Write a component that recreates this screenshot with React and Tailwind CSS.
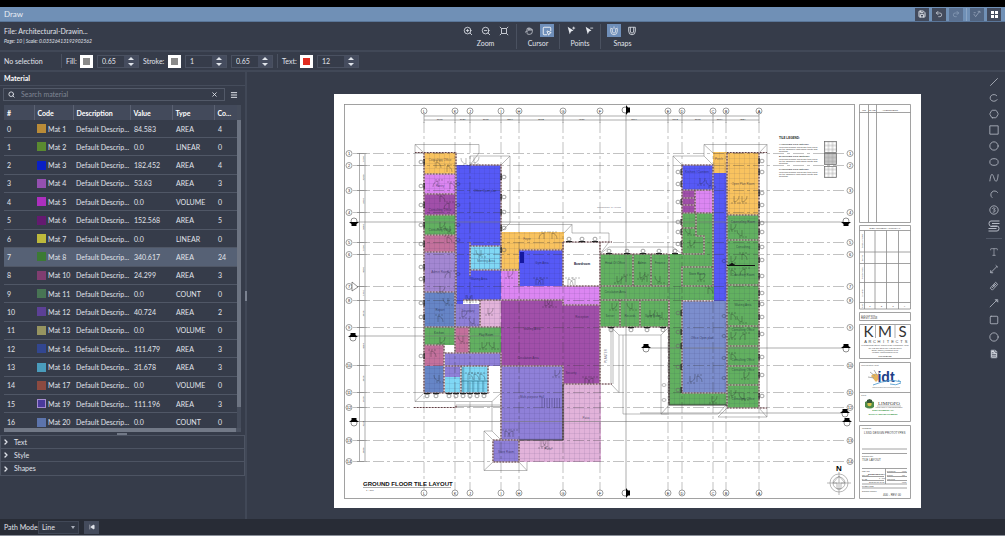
import React, { useState } from 'react'
import {
  ZoomIn, ZoomOut, Hand, SquareMousePointer, Search, X, Menu, Save, Undo2, Redo2,
  ChevronRight, Hexagon, Square, Circle, Type, SkipBack, FileText,
} from 'lucide-react'

const materials = [
  [0, '#b98b38', 'Mat 1', '84.583', 'AREA', 4],
  [1, '#5a8a30', 'Mat 2', '0.0', 'LINEAR', 0],
  [2, '#0a20c4', 'Mat 3', '182.452', 'AREA', 4],
  [3, '#9450b0', 'Mat 4', '53.63', 'AREA', 3],
  [4, '#ac2fbe', 'Mat 5', '0.0', 'VOLUME', 0],
  [5, '#641a70', 'Mat 6', '152.568', 'AREA', 5],
  [6, '#bdb93c', 'Mat 7', '0.0', 'LINEAR', 0],
  [7, '#3c7a34', 'Mat 8', '340.617', 'AREA', 24],
  [8, '#803d70', 'Mat 10', '24.299', 'AREA', 3],
  [9, '#487454', 'Mat 11', '0.0', 'COUNT', 0],
  [10, '#5c4096', 'Mat 12', '40.724', 'AREA', 2],
  [11, '#969460', 'Mat 13', '0.0', 'VOLUME', 0],
  [12, '#324690', 'Mat 14', '111.479', 'AREA', 3],
  [13, '#4a9cbc', 'Mat 16', '31.678', 'AREA', 3],
  [14, '#8c4a40', 'Mat 17', '0.0', 'VOLUME', 0],
  [15, '#4a3a9c', 'Mat 19', '111.196', 'AREA', 3],
  [16, '#5c74ac', 'Mat 20', '0.0', 'COUNT', 0],
]

const orange = '#f9c35f'
const pink = '#dc86f2'
const purple = '#a14fa9'
const green = '#62b060'
const rose = '#c4719c'
const violet = '#a387d2'
const steel = '#6685c6'
const blue = '#5659f6'
const cyan = '#80d8f5'
const peri = '#8f80d8'
const pale = '#e2b3da'

// x1, y1, x2, y2, fill
const rooms = [
  [424, 153, 456, 174, orange],
  [424, 174, 456, 194, pink],
  [424, 194, 456, 215, purple],
  [424, 215, 456, 235, green],
  [424, 235, 456, 252, rose],
  [424, 252, 456, 292, violet],
  [424, 292, 456, 327, steel],
  [456, 165, 501, 300, blue],
  [456, 300, 463, 304, blue],
  [470, 246, 501, 270, cyan],
  [456, 304, 480, 327, peri],
  [480, 300, 501, 327, pale],
  [424, 327, 455, 345, green],
  [455, 327, 469, 353, rose],
  [469, 327, 501, 353, green],
  [424, 345, 444, 366, rose],
  [445, 353, 501, 366, peri],
  [445, 366, 460, 377, peri],
  [424, 366, 444, 393, steel],
  [445, 377, 460, 393, cyan],
  [461, 366, 488, 393, cyan],
  [501, 232, 564, 250, orange],
  [501, 250, 519, 271, orange],
  [519, 250, 563, 286, blue],
  [501, 271, 519, 300, pink],
  [519, 286, 563, 300, pink],
  [563, 286, 600, 305, pink],
  [501, 300, 563, 366, purple],
  [563, 305, 600, 384, purple],
  [501, 366, 563, 440, peri],
  [563, 384, 601, 462, pale],
  [519, 440, 563, 462, pale],
  [493, 440, 519, 462, peri],
  [600, 254, 669, 286, green],
  [600, 286, 714, 300, green],
  [600, 300, 669, 327, green],
  [669, 254, 682, 405, green],
  [682, 213, 714, 286, green],
  [682, 165, 714, 190, blue],
  [682, 190, 695, 213, purple],
  [695, 190, 714, 213, pink],
  [682, 393, 727, 405, green],
  [682, 301, 727, 393, '#7c8ecd'],
  [713, 152, 727, 173, orange],
  [714, 173, 727, 301, blue],
  [727, 153, 759, 215, orange],
  [727, 215, 759, 408, green],
]

const columns = [
  ['L', 424], ['K', 455], ['J', 470], ['I', 501], ['H', 519], ['G', 563],
  ['F', 600], ['E', 668], ['D', 682], ['C', 713], ['B', 726], ['A', 759],
]

const rows = [153, 165, 190, 212, 242, 254, 286, 300, 327, 365, 392, 407, 440, 461]

const walls = [
  'M415 152.5H456V165', 'M424 153V393H444', 'M456 165V304M470 165H501V270', 'M424 174H456M424 194H456M424 215H456M424 235H456M424 252H456M424 292H456',
  'M470 242V276M470 246H501M470 270H519V286', 'M424 327H501M455 293V353M480 300V327M463 300H563V305H600', 'M469 327V353M445 353H501V440',
  'M424 345H444V393H488V366H445M461 366V393', 'M501 366H563V440', 'M519 250H563V286H600M563 242V286M563 242H612', 'M600 242V384M563 384H612',
  'M493 440H519V462H493Z', 'M600 254H669V286H600M633 254V286M651 254V286', 'M600 300H669V327H600M620 300V327M640 300V327',
  'M682 165V254M682 165H713V286H682V267H713M682 190H713M695 190V213M682 213H713M682 198H695M682 205H695M682 228H696V213M696 228V236H704V254H682',
  'M669 300V405M682 300V393H727M713 301H682', 'M727 153V408M759 153V408M727 152.5H767M727 408H767', 'M727 215H759M727 240H759M727 285H759M727 326H759M727 346H759M727 366H759M727 385H759',
  'M414 407.5H456V405',
]

const roofs = [
  'M415 144.500H479V153L470 165M415 144.500L424 153M415 144.500V401.500H492L501 393M415 401.500L424 393',
  'M470 165V156H510V223L501 232M510 156L501 165',
  'M501 232V224.500H572L564 233M572 224.500V233H609V242L600 254M600 254L609 247H673L682 254',
  'M673 254V156H704V144.500H767V417H718L727 408M673 156L682 165M704 156L713 165M704 144.500L713 153M767 144.500L759 153M767 417L759 408',
  'M492 401.500V431M484 431H492L501 440M484 431V470.500H527V462M484 470.500L493 462M527 470.500L519 462M484 431L493 440',
  'M456 405H501M456 406.500H501',
  'M611 327V384M613 327V384M611 327L619 335V392.500L611 384M619 335H661V414L669 405M661 335L669 327M623 335V414H718L726 405M661 414H669',
]

// hinge x, y and the direction the leaf opens to
const doors = [
  [436, 168, 1, -1], [447, 172, 1, -1], [438, 187, -1, -1], [450, 189, 1, -1], [440, 202, 1, -1], [449, 209, -1, -1],
  [440, 222, 1, 1], [450, 226, -1, 1], [447, 243, 1, -1], [450, 278, -1, -1], [440, 286, 1, 1], [448, 298, -1, 1],
  [438, 322, 1, -1], [466, 158, -1, 1], [474, 157, 1, 1], [481, 250, -1, 1], [466, 295, 1, 1], [472, 295, -1, 1],
  [462, 311, 1, 1], [474, 318, -1, 1], [488, 308, 1, 1], [440, 337, 1, 1], [482, 342, 1, 1], [494, 342, -1, 1],
  [463, 336, -1, 1], [431, 357, 1, -1], [439, 375, -1, 1], [468, 380, 1, -1], [474, 380, 1, -1], [480, 380, 1, -1],
  [508, 271, 1, 1], [544, 239, -1, -1], [552, 239, 1, -1], [536, 285, 1, -1], [543, 285, -1, -1], [568, 285, 1, -1], [575, 285, -1, -1],
  [545, 300, 1, 1], [552, 300, -1, 1], [555, 370, 1, 1], [505, 437, 1, -1], [513, 437, -1, -1], [541, 441, 1, 1], [548, 441, -1, 1],
  [585, 384, 1, -1], [593, 384, -1, -1], [617, 276, 1, 1], [626, 282, -1, -1], [640, 272, 1, 1], [647, 282, -1, -1], [660, 276, -1, 1],
  [612, 303, 1, 1], [632, 303, -1, 1], [650, 310, 1, 1], [662, 312, -1, 1], [700, 178, 1, 1], [711, 180, -1, 1], [700, 274, 1, 1],
  [708, 294, 1, -1], [690, 240, 1, 1], [690, 228, -1, 1], [731, 224, 1, 1], [742, 230, -1, 1], [731, 256, 1, 1], [742, 260, 1, -1],
  [731, 276, 1, -1], [745, 275, -1, -1], [731, 320, 1, -1], [742, 316, -1, 1], [731, 332, 1, 1], [745, 340, -1, -1], [731, 360, 1, -1],
  [744, 372, 1, 1], [731, 390, 1, 1], [744, 393, -1, 1], [697, 382, 1, -1], [690, 376, 1, 1], [712, 396, 1, 1], [742, 196, 1, 1], [734, 196, 1, 1],
]

const windows = [
  [421, 162], [421, 186], [421, 205], [421, 225], [421, 244], [421, 267], [421, 279], [421, 303], [421, 317], [421, 356],
  [504, 177], [504, 197], [504, 212], [504, 228], [504, 250], [427, 396], [436, 396], [449, 396], [456, 396], [463, 396], [470, 396], [477, 396], [484, 396],
  [569, 239], [582, 239], [595, 239], [609, 251], [627, 251], [643, 251], [659, 251], [675, 251],
  [611, 330], [631, 330], [647, 330], [663, 330], [678, 172], [678, 184], [678, 202], [678, 222], [678, 232], [678, 244],
  [762, 161], [762, 172], [762, 193], [762, 205], [762, 223], [762, 232], [762, 247], [762, 260], [762, 276], [762, 293], [762, 304],
  [762, 317], [762, 334], [762, 357], [762, 375], [762, 396], [678, 313], [678, 332], [678, 346], [678, 367], [678, 390],
]

// switches drawn inside the rooms
const sockets = [[724, 261], [724, 316], [724, 336], [724, 358], [724, 378], [664, 385], [664, 400], [458, 184], [458, 205], [458, 225], [458, 240], [458, 274]]

const roomNames = [
  [440, 161, 'Consulting Office'], [440, 187, 'Pantry'], [440, 211, 'Consulting Office'], [440, 231, 'Consulting Office'],
  [440, 273, 'Admin Room'], [440, 311, 'Report'], [485, 192, 'Office Open plan'], [486, 262, 'Meeting Area'], [479, 280, 'Waiting Area'],
  [468, 312, 'Secretary'], [486, 336, 'Play Room'], [439, 334, 'Kitchen'], [527, 240, 'Foyer'], [542, 264, 'Gym Area'],
  [532, 330, 'Waiting Area'], [582, 318, 'Reception'], [528, 359, 'Circulation Area'], [532, 398, 'Multi-purpose Hall'], [506, 453, 'Store Room'],
  [586, 419, 'Patio'], [548, 450, 'Patio'], [571, 374, 'Security'], [615, 264, 'Head Of Office'], [642, 264, 'Admin'],
  [660, 264, 'Finance'], [615, 293, 'Circulation Area'], [610, 317, 'Server'], [630, 317, 'Records'], [653, 317, 'Store Room'],
  [702, 339, 'Office Open plan'], [697, 173, 'Kitchen / Canteen'], [697, 275, 'Store Room'], [719, 160, 'Porch'],
  [743, 185, 'Open Plan Room'], [743, 223, 'Counselling Room'], [743, 248, 'Consulting'], [743, 276, 'Consulting Room'],
  [743, 306, 'Waiting Area'], [743, 331, 'Consulting Office'], [743, 361, 'Consulting Office'], [743, 371, 'Consulting Office'], [743, 400, 'Consulting Office'],
]

function SectionMark({ x, y, flip }) {
  return (
    <g transform={`translate(${x} ${y})${flip ? ' rotate(180)' : ''}`}>
      <circle r="3" cy="-1" fill="#fff" stroke="#444" strokeWidth=".6" />
      <path d="M-5 0H5L2.500 2V4H-2.500V2Z" fill="#000" />
    </g>
  )
}

function GridBubble({ x, y, label }) {
  return (
    <g>
      <circle cx={x} cy={y} r="3" fill="#fff" stroke="#777" strokeWidth=".7" />
      <text x={x} y={y + 1.500} fontSize="4" textAnchor="middle" fill="#222">{label}</text>
    </g>
  )
}

function TitleBlock() {
  return (
    <g>
      <g fill="none" stroke="#8a8a8a" strokeWidth=".8">
        <path d="M859.500 104.500H910.500V222.500H859.500ZM859.500 112.500H910.500M868.500 104.500V222.500M876.500 104.500V222.500" />
        <path d="M859.500 225.500H910.500V309H859.500ZM859.500 230.500H910.500M859.500 252H910.500M859.500 263.500H910.500M859.500 282.500H910.500M859.500 302.500H910.500M864.500 230.500V309M875 230.500V309M886.500 230.500V309M898.500 230.500V309" />
        <path d="M859.500 312.500H910.500V320.500H859.500ZM859.500 324.500H910.500V358.500H859.500ZM859.500 362.500H910.500V421.500H859.500ZM859.500 392.500H910.500" />
        <path d="M859.500 425.500H910.500V498.500H859.500ZM862 449H907M862 453.500H907M862 468.500H907M862 484H907M862 488H907M885.500 468.500V484M862 476.500H884M862 480.500H884M887 472.500H907M887 476.500H907M887 480.500H907" />
      </g>
      <g fontSize="2.500" fill="#444" textAnchor="middle">
        <text x="864" y="110.500">NO</text>
        <text x="872.500" y="110.500">DATE</text>
        <text x="890" y="110.500">AMENDMENT</text>
        <text x="885" y="228.800">DEPARTMENT APPROVAL</text>
        {['1', '2', '3', '4'].map((n, i) => <text key={n} x={870 + i * 11.500} y="307">{n}</text>)}
        {[['SIGNATURE', 241], ['DATE', 258], ['POSITION', 273], ['NAME', 293], ['NO', 306]].map(([t, y]) => (
          <text key={t} transform={`translate(863 ${y}) rotate(-90)`}>{t}</text>
        ))}
      </g>
      <text x="861" y="315.500" fontSize="2" fill="#555">CAD FILE 2018</text>
      <text x="861" y="319" fontSize="3" fill="#333">REVIT 2018</text>
      <g fill="#333" fontFamily="'Lato','Open Sans',sans-serif" fontSize="15" textAnchor="middle">
        <text x="868.500" y="337">K</text>
        <text x="885" y="337">M</text>
        <text x="902.500" y="337">S</text>
      </g>
      <path d="M875.500 325V338M895 325V338" stroke="#777" strokeWidth=".6" />
      <g fill="#444" fontSize="4" textAnchor="middle">
        {'ARCHITECTS'.split('').map((c, i) => <text key={i} x={865.500 + i * 4.500} y="343">{c}</text>)}
      </g>
      <g fill="#444" fontSize="2" textAnchor="middle">
        <text x="885" y="346.300">97 Schoeman Street, Pioneer Park, Polokwane, 0699</text>
        <text x="885" y="348.800">Tel: 015 291 2345 Fax: 015 291 2346</text>
        <text x="885" y="351">Email: admin@kmsarch.co.za</text>
        <text x="885" y="353.200">Website: www.kmsarch.co.za</text>
        <text x="885" y="357" fontWeight="700">POLOKWANE</text>
      </g>
      <text x="861" y="366" fontSize="2" fill="#555">Implementing Agent</text>
      <g>
        <path d="M871 376a5 5 0 0 1 9 2l-4 4z" fill="#e6b45a" />
        <path d="M870 372l5 4M874 370l3 5M880 371l-2 4M868 377l6 1" stroke="#999" strokeWidth=".8" />
        <text x="886" y="382" textAnchor="middle" fontSize="14" fontWeight="700" fill="#203f88">idt</text>
        <path d="M873 385q17-7 28-3l-3-2M890 384q6 2 11-1" fill="none" stroke="#5aa0d0" strokeWidth=".9" />
        <text x="886" y="387.500" textAnchor="middle" fontSize="2" fill="#666">independent development trust</text>
      </g>
      <text x="861" y="395.500" fontSize="2" fill="#555">Client</text>
      <g>
        <path d="M865 402q4-3 9 0v5q-4 3-9 0z" fill="#4f8a4a" />
        <circle cx="869.500" cy="404" r="2.200" fill="#d9c24a" />
        <path d="M867 400l2.500-1 2.500 1v3h-5z" fill="#36553a" />
        <text x="889" y="405" textAnchor="middle" fontSize="5" fontFamily="'Liberation Serif',serif" fill="#444">LIMPOPO</text>
        <path d="M877 406H901" stroke="#888" strokeWidth=".5" />
        <text x="889" y="408" textAnchor="middle" fontSize="2" fill="#555">PROVINCIAL GOVERNMENT</text>
        <text x="883" y="411" textAnchor="middle" fontSize="2.500" fontWeight="700" fill="#2c8f3a">DEPARTMENT OF</text>
        <text x="883" y="414.500" textAnchor="middle" fontSize="2.500" fontWeight="700" fill="#2c8f3a">SOCIAL DEVELOPMENT</text>
      </g>
      <g fill="#444" fontSize="2">
        <text x="862" y="429">PROJECT</text>
        <text x="864" y="433.500" fontSize="3">LSSD DESIGN PROTOTYPES</text>
        <text x="862" y="456.500">Drawing title</text>
        <text x="862" y="461" fontSize="3">TILE LAYOUT</text>
        <text x="862" y="471.500">REF NO</text>
        <text x="868" y="474.500" fontSize="2.500" fontWeight="700">2018/KMS/104</text>
        <text x="862" y="476">SCALE</text>
        <text x="879" y="479">1 : 100</text>
        <text x="862" y="479.800">DATE</text>
        <text x="869" y="483">2018/10/11 09:30</text>
        <text x="862" y="486.500">SHEET SIZE</text>
        <text x="887" y="471.500">Designed</text>
        <text x="902" y="472">KMS</text>
        <text x="887" y="476">Drawn</text>
        <text x="902" y="476">PM</text>
        <text x="887" y="480">Checked</text>
        <text x="902" y="483">KMS</text>
        <text x="862" y="492">Drawing number</text>
        <text x="883" y="496" fontSize="3">400 - REV 00</text>
      </g>
    </g>
  )
}

function FloorPlan() {
  return (
    <svg viewBox="334 94 587 414" className="block w-full bg-white" fontFamily="'Liberation Sans',Arial,sans-serif" role="img" aria-label="Ground floor tile layout">
      <defs>
        <pattern id="tiles" width="5" height="5" patternUnits="userSpaceOnUse" x="424" y="153">
          <path d="M0 0H5M0 0V5" stroke="#1c1c50" strokeOpacity=".28" strokeWidth=".6" />
        </pattern>
        <pattern id="legendTile" width="4" height="4" patternUnits="userSpaceOnUse" x="824.500" y="141.500">
          <path d="M0 0H4V4H0Z" fill="none" stroke="#999" strokeWidth=".6" />
        </pattern>
      </defs>
      <rect x="344.500" y="104.500" width="510" height="394" fill="none" stroke="#8a8a8a" strokeWidth=".8" />

      <g fill="none" stroke="#777" strokeWidth=".5">
        {roofs.map((d) => <path key={d} d={d} />)}
      </g>

      {rooms.map(([x1, y1, x2, y2, fill]) => (
        <rect key={`${x1}-${y1}`} x={x1} y={y1} width={x2 - x1} height={y2 - y1} fill={fill} />
      ))}
      {rooms.map(([x1, y1, x2, y2]) => (
        <rect key={`${x1}-${y1}`} x={x1} y={y1} width={x2 - x1} height={y2 - y1} fill="url(#tiles)" />
      ))}

      {/* Grid lines */}
      <g stroke="#333" strokeOpacity=".5" strokeWidth=".6" strokeDasharray="11 3 3 3">
        {columns.map(([l, x]) => <path key={l} d={`M${x} 122V490`} />)}
        {rows.map((y) => <path key={y} d={`M353 ${y}.500H847`} />)}
      </g>
      <g stroke="#777" strokeWidth=".6">
        <path d="M424 116H759M424 120H759M359.500 153V461M365 153V461" />
        {columns.map(([l, x]) => <path key={l} d={`M${x} 114V123`} />)}
        {rows.map((y) => <path key={y} d={`M357 ${y}.500H367`} />)}
        <path d="M354 222H846M352 336H500M646 348H846M354 421.500H846M640 413H846M626 112V490" />
      </g>
      <g fontSize="2.500" fill="#222" textAnchor="middle">
        {columns.slice(1).map(([l, x], i) => <text key={l} x={(x + columns[i][1]) / 2} y="119.500">{(x - columns[i][1]) * 128}</text>)}
        {rows.slice(1).map((y, i) => (
          <text key={y} transform={`translate(364 ${(y + rows[i]) / 2}) rotate(-90)`}>{(y - rows[i]) * 128}</text>
        ))}
      </g>
      {columns.map(([l, x]) => (
        <g key={l}>
          <GridBubble x={x} y={111} label={l} />
          <GridBubble x={x} y={493} label={l} />
        </g>
      ))}
      {rows.map((y, i) => (
        <g key={y}>
          <GridBubble x={349} y={y + 0.500} label={i + 1} />
          <GridBubble x={850} y={y + 0.500} label={i + 1} />
        </g>
      ))}

      {/* Walls */}
      <g fill="none">
        {walls.map((d) => (
          <g key={d}>
            <path d={d} stroke="#c9b3b5" strokeWidth="1.200" />
            <path d={d} stroke="#5e4348" strokeWidth="1.200" strokeDasharray="1.500 1.500" />
          </g>
        ))}
        <path d="M563 384V440H519M669 327V405H727" stroke="#333" strokeWidth="1" />
        <path d="M727 265.500H755M729 265.500q3-4 6 0" stroke="#111" strokeWidth="1" fill="#111" />
        <path d="M542 398V408M544.500 398V408M547 398V408M549.500 398V408M552 398V408M554.500 398V408M557 398V408M559.500 398V408" stroke="#3b3568" strokeWidth=".4" />
        <path d="M463 367V392M468 381V392M473 381V392M478 381V392M483 381V392M461 381H488" stroke="#2b6d86" strokeWidth=".7" />
      </g>
      <rect x="520" y="252" width="4" height="11" fill="#1518a0" />

      <g fill="none" stroke="#222" strokeOpacity=".5" strokeWidth=".6">
        {doors.map(([x, y, sx, sy]) => (
          <path key={`${x}-${y}`} d={`M${x} ${y}v${sy * 6}q${sx * 5} ${-sy} ${sx * 5} ${-sy * 6}M${x - 3} ${y + sy * 7}h2m1 0h2m1 0h2`} />
        ))}
        {sockets.map(([x, y]) => <ellipse key={`${x}-${y}`} cx={x} cy={y} rx="2" ry="1.500" />)}
      </g>
      {windows.map(([x, y]) => {
        const horizontal = [239, 251, 330, 396].includes(y) && x < 676
        return (
          <g key={`${x}-${y}`}>
            <ellipse cx={x} cy={y} rx="2" ry="1.800" fill="none" stroke="#666" strokeWidth=".6" />
            {horizontal
              ? <rect x={x - 3} y={y < 300 ? y + 2 : y - 3} width="6" height="1.200" fill="#222" />
              : <rect x={x < 422 || (x > 670 && x < 680) ? x + 2.500 : x - 3.500} y={y - 3} width="1.200" height="6" fill="#222" />}
          </g>
        )
      })}

      <g fontSize="3" fill="#151535" textAnchor="middle">
        <g fillOpacity=".65">
          {roomNames.map(([x, y, name]) => <text key={`${x}-${y}`} x={x} y={y}>{name}</text>)}
          <text x="609" y="208" fontSize="2.500">OUTDOOR WAITING</text>
          <text transform="translate(607 356) rotate(-90)">PLANTER</text>
        </g>
        <text x="582" y="265" fontWeight="700">Boardroom</text>
      </g>

      <SectionMark x={354} y={222} />
      <SectionMark x={846} y={222} />
      <SectionMark x={353} y={337} flip />
      <SectionMark x={354} y={422} flip />
      <SectionMark x={846} y={348} flip />
      <SectionMark x={845} y={413} flip />
      <SectionMark x={847} y={422} flip />
      <SectionMark x={646} y={348} flip />
      <g transform="rotate(-90 626 110)"><SectionMark x={626} y={110} /></g>
      <g transform="rotate(-90 626 493)"><SectionMark x={626} y={493} /></g>
      <path d="M352 282V291L358 287Z" fill="#fff" stroke="#444" strokeWidth=".6" />

      {/* Tile legend */}
      <text x="779" y="139" fontSize="3" fontWeight="700" fill="#222">TILE LEGEND:</text>
      {[['A', 'Interior', 145, '#fff'], ['B', 'Exterior', 157, '#c9c9c9'], ['C', 'Interior', 170, '#fff']].map(([n, kind, y, fill]) => (
        <g key={n}>
          <g fontSize="2.400" fill="#333">
            <text x="779" y={y} fontWeight="700">{n}.Porcelain Tiles ({kind})</text>
            <text x="779" y={y + 2.600}>600x600x10mm Porcelain tiles fixed</text>
            <text x="779" y={y + 5}>on tile adhesive with 5mm joints and</text>
            <text x="779" y={y + 7.400}>grouting.</text>
          </g>
          <rect x="824.500" y={y - 3.500} width="12" height="11" fill={fill} />
          <rect x="824.500" y={y - 3.500} width="12" height="11" fill="url(#legendTile)" stroke="#666" strokeWidth=".7" />
        </g>
      ))}

      {/* North arrow */}
      <text x="839" y="471" fontSize="8" fontWeight="700" textAnchor="middle">N</text>
      <g fill="none" stroke="#888" strokeWidth=".6">
        <circle cx="839" cy="483" r="9" />
        <circle cx="839" cy="483" r="6" />
        <path d="M827 483H851M839 472V495M839 476L833 483H837V489H841V483H845Z" />
      </g>

      <text x="363" y="486" fontSize="6" fontWeight="700" fill="#111">GROUND FLOOR TILE LAYOUT</text>
      <path d="M363 487.500H451" stroke="#777" strokeWidth=".6" />
      <text x="366" y="491" fontSize="2.500" fill="#444">1 : 100</text>
      <TitleBlock />
    </svg>
  )
}

function PointIcon({ minus }) {
  return (
    <svg viewBox="0 0 12 12" className="size-2.5">
      <path d="M2 1L9 5.500L6 6.500L4.500 10Z" fill="#e5e8ee" />
      <path d={minus ? 'M7.500 2.500H11' : 'M7.500 2.500H11M9.200 .8V4.200'} stroke="#e5e8ee" />
    </svg>
  )
}

function ShapeIcon({ d, className = 'size-2.5' }) {
  return (
    <svg viewBox="0 0 24 24" className={className} fill="none" stroke="currentColor" strokeWidth="2">
      <path d={d} />
    </svg>
  )
}

function ToolButton({ label, active, children }) {
  return (
    <button aria-label={label} className={`flex h-[13px] w-3.5 items-center justify-center ${active ? 'bg-[#6f8fba]' : ''}`}>
      {children}
    </button>
  )
}

function ToolGroup({ label, width, last, children }) {
  return (
    <div className={`flex h-[25px] flex-col items-center gap-0.5 ${width} ${last ? '' : 'border-r border-[#4a5160]'}`}>
      <div className="flex gap-1">{children}</div>
      <span className="leading-2">{label}</span>
    </div>
  )
}

function NumberField({ label, value }) {
  return (
    <div className="flex h-[13px] w-[42px] shrink-0 border border-[#4a5161]">
      <input aria-label={label} defaultValue={value} className="w-0 min-w-0 flex-1 bg-transparent pl-1 outline-none" />
      <div className="flex w-3.5 flex-col items-center justify-center gap-[3px] bg-[#454c5e]">
        <button aria-label={`${label} up`} className="size-0 border-x-[3px] border-b-[3px] border-x-transparent border-b-[#e0e4ea]" />
        <button aria-label={`${label} down`} className="size-0 border-x-[3px] border-t-[3px] border-x-transparent border-t-[#e0e4ea]" />
      </div>
    </div>
  )
}

function Swatch({ label, red }) {
  return (
    <button aria-label={label} className="flex size-[13px] shrink-0 items-center justify-center bg-white">
      <span className={`size-[7px] ${red ? 'bg-[#e02c20]' : 'bg-[#8a8a8a]'}`} />
    </button>
  )
}

const shapeTools = [
  ['Line', <ShapeIcon d="M3 21L21 3" />],
  ['Arc', <ShapeIcon d="M19 7A9 8 0 1 0 20 15" />],
  ['Polygon', <Hexagon className="size-2.5 rotate-90" />],
  ['Rectangle', <ShapeIcon d="M2 2H22V22H2Z" />],
  ['Circle', <Circle className="size-2.5" />],
  ['Ellipse', <ShapeIcon d="M2 12A10 8 0 0 1 22 12A10 8 0 0 1 2 12Z" />],
  ['Spline', <ShapeIcon d="M2 20C5 -4 9 2 12 12S20 26 22 3" />],
  ['Open arc', <ShapeIcon d="M8 21A9 9 0 1 1 21 9" />],
  ['Count', <ShapeIcon d="M12 2A10 10 0 1 1 11.900 2ZM8 9C10 5 16 7 14 10L11 12C17 11 16 18 9 17" />],
  ['Path', <ShapeIcon className="size-3" d="M23 2H6Q2 2 2 7T6 13H18M23 7H8M7 12H18Q22 12 22 17T18 22H1M1 17H17" />],
]

const markupTools = [
  ['Text', <Type className="size-2.5" strokeWidth={1.5} />],
  ['Measure', <ShapeIcon d="M4 15V21H10M4 21L20 5M16 3L21 8" />],
  ['Ruler', <ShapeIcon d="M3 17L16 3L21 8L8 22ZM7 17L18 6M10 10L13 13M13 7L16 10" />],
  ['Arrow', <ShapeIcon d="M2 22L19 5M15 4H21V10Z" />],
  ['Box', <Square className="size-2.5" />],
  ['Cloud', <Circle className="size-2.5" />],
  ['Note', <FileText className="size-2.5" fill="#d6dae2" stroke="#4a5160" />],
]

function MaterialTable() {
  const [selected, setSelected] = useState(7)
  return (
    <div className="mx-1 mt-1 flex h-[323px] overflow-hidden">
      <div className="min-w-0 flex-1 overflow-hidden">
        <table className="h-[327px] w-full table-fixed border-collapse text-left leading-[10px]">
          <colgroup>
            <col className="w-[30px]" /><col className="w-[39px]" /><col className="w-[57px]" />
            <col className="w-[42px]" /><col className="w-[42px]" /><col />
          </colgroup>
          <thead>
            <tr className="h-[15px] bg-[#434a5b] text-white">
              {['#', 'Code', 'Description', 'Value', 'Type', 'Co...'].map((h) => (
                <th key={h} className="border-r border-[#5a6172] px-[3px] py-0 font-bold last:border-r-0">{h}</th>
              ))}
            </tr>
          </thead>
          <tbody>
            {materials.map(([id, color, code, value, type, count]) => (
              <tr key={id} onClick={() => setSelected(id)} className={`border-b border-[#505766] ${selected === id ? 'bg-[#566175]' : ''}`}>
                <td className="px-[3px] py-0">{id}</td>
                <td className="py-0 pl-[3px] whitespace-nowrap">
                  <div className="flex items-center gap-0.5">
                    <span className={`size-[9px] shrink-0 ${id === 15 ? 'border border-[#a58bd0]' : ''}`} style={{ backgroundColor: color }} />
                    {code}
                  </div>
                </td>
                <td className="px-[3px] py-0 whitespace-nowrap">Default Descrip...</td>
                <td className="px-1 py-0">{value}</td>
                <td className="px-1 py-0">{type}</td>
                <td className="px-1 py-0">{count}</td>
              </tr>
            ))}
          </tbody>
        </table>
      </div>
      <div className="w-1 shrink-0 bg-[#454c5b]">
        <div className="mt-[15px] h-[287px] bg-[#6d7482]" />
      </div>
    </div>
  )
}

function Sidebar() {
  return (
    <aside className="flex w-[245px] shrink-0 flex-col">
      <h2 className="h-3.5 border-b border-[#454c5b] pl-1 leading-3 font-bold text-white">Material</h2>
      <div className="mt-0.5 flex items-center gap-[5px] pl-[3px]">
        <div className="flex h-[13px] w-[222px] items-center border border-[#525968] px-1">
          <Search className="size-[7px]" strokeWidth={3} />
          <input aria-label="Search material" placeholder="Search material" className="ml-1.5 min-w-0 flex-1 bg-transparent outline-none placeholder:text-[#7f8694]" />
          <button aria-label="Clear search"><X className="mr-0.5 size-[7px]" strokeWidth={3} /></button>
        </div>
        <button aria-label="List options"><Menu className="size-2" strokeWidth={3} /></button>
      </div>
      <MaterialTable />
      <div className="ml-1 h-1 w-[237px] bg-[#4b5261]"><div className="h-1 w-[232px] bg-[#727987]" /></div>
      <div className="mt-px ml-[117px] h-0.5 w-2.5 bg-[#727987]" />
      <div className="border border-[#4d5463]">
        {['Text', 'Style', 'Shapes'].map((s) => (
          <button key={s} className="flex h-[13px] w-full items-center gap-1 border-b border-[#4d5463] pl-px last:border-b-0">
            <ChevronRight className="size-2" strokeWidth={4} />{s}
          </button>
        ))}
      </div>
    </aside>
  )
}

const App = () => {
  return (
    <div className="flex h-screen flex-col overflow-hidden border-t-[7px] border-black bg-[#363c4a] font-['Lato','Open_Sans',sans-serif] text-[7px] text-[#e0e3ea]">
      <header className="flex h-[15px] shrink-0 items-center justify-between border-b border-[#5a7699] bg-[#7090b6] pr-1 pl-1">
        <h1 className="text-[8px] text-[#e8edf4]">Draw</h1>
        <div className="flex items-center gap-[3px]">
          <button aria-label="Save" className="flex h-[13px] w-3.5 items-center justify-center bg-[#434b5d]"><Save className="size-2" strokeWidth={3} /></button>
          <button aria-label="Undo" className="flex h-[13px] w-3.5 items-center justify-center bg-[#434b5d]"><Undo2 className="size-2" /></button>
          <button aria-label="Redo" disabled className="flex h-[13px] w-3.5 items-center justify-center bg-[#5b7191] text-[#8fa3bd]"><Redo2 className="size-2" /></button>
          <span className="h-[13px] w-px bg-[#8ba5c5]" />
          <button aria-label="Check" className="flex h-[13px] w-3.5 items-center justify-center bg-[#526581] text-[#a3b1c5]">
            <ShapeIcon className="size-2" d="M2 12L8 20L19 5M14 4H21V9M2 8H8" />
          </button>
          <button aria-label="Layout" className="flex h-[13px] w-3.5 items-center justify-center bg-[#434b5d]">
            <svg viewBox="0 0 7 7" className="size-[7px]"><path d="M0 0H3V3H0ZM4 0H7V3H4ZM0 4H3V7H0ZM4 4H7V7H4Z" fill="#fff" /></svg>
          </button>
        </div>
      </header>

      <div className="flex h-[30px] shrink-0 border-b-2 border-[#414857]">
        <div className="w-[94px] shrink-0 pt-1 pl-1 whitespace-nowrap">
          <p className="leading-[11px]">File: Architectural-Drawin...</p>
          <p className="text-[5px] leading-[9px] italic">Page: 10 | Scale: 0.03526413192902562</p>
        </div>
        <div className="flex flex-1 items-start justify-center pt-0.5">
          <div className="flex">
            <ToolGroup label="Zoom" width="w-[62px]">
              <ToolButton label="Zoom in"><ZoomIn className="size-2.5" /></ToolButton>
              <ToolButton label="Zoom out"><ZoomOut className="size-2.5" /></ToolButton>
              <ToolButton label="Zoom to fit"><ShapeIcon d="M6 6H18V18H6ZM2 2L6 6M22 2L18 6M2 22L6 18M22 22L18 18" /></ToolButton>
            </ToolGroup>
            <ToolGroup label="Cursor" width="w-[43px]">
              <ToolButton label="Pan"><Hand className="size-2" /></ToolButton>
              <ToolButton label="Select" active><SquareMousePointer className="size-2.5 text-white" /></ToolButton>
            </ToolGroup>
            <ToolGroup label="Points" width="w-[41px]">
              <ToolButton label="Add point"><PointIcon /></ToolButton>
              <ToolButton label="Remove point"><PointIcon minus /></ToolButton>
            </ToolGroup>
            <ToolGroup label="Snaps" width="w-[43px]" last>
              <ToolButton label="Magnet snap" active><ShapeIcon d="M4 6H8V12Q8 17 12 17T16 12V6H20V12Q20 21 12 21T4 12ZM12 1V7M4 2V3M20 2V3" /></ToolButton>
              <ToolButton label="Shape snap"><ShapeIcon d="M4 3H20V12Q20 21 12 21T4 12ZM8 3V12Q8 17 12 17T16 12V3" /></ToolButton>
            </ToolGroup>
          </div>
        </div>
      </div>

      <div className="flex h-5 shrink-0 items-center gap-1 border-b-2 border-[#414857] pl-1 whitespace-nowrap">
        <span className="w-[53px]">No selection</span>
        <span className="h-3.5 w-px bg-[#4a5160]" />
        <span className="w-[10px]">Fill:</span>
        <Swatch label="Fill colour" />
        <NumberField label="Fill opacity" value="0.65" />
        <span className="w-[21px]">Stroke:</span>
        <Swatch label="Stroke colour" />
        <NumberField label="Stroke width" value="1" />
        <NumberField label="Stroke opacity" value="0.65" />
        <span className="h-3.5 w-px bg-[#4a5160]" />
        <span className="w-[14px]">Text:</span>
        <Swatch label="Text colour" red />
        <NumberField label="Text size" value="12" />
      </div>

      <div className="flex min-h-0 flex-1">
        <Sidebar />
        <div className="flex w-0.5 shrink-0 items-center bg-[#414857]"><span className="h-2.5 w-0.5 bg-[#7a8190]" /></div>
        <main className="min-w-0 flex-1 pt-[22px] pr-[62px] pl-[87px]">
          <FloorPlan />
        </main>
        <nav className="flex w-[22px] shrink-0 flex-col items-center pt-0.5 text-[#b4b9c4]">
          {shapeTools.map(([label, icon]) => (
            <button key={label} aria-label={label} className="flex h-4 w-4 shrink-0 items-center justify-center">{icon}</button>
          ))}
          <span className="my-1 h-px w-4 shrink-0 bg-[#505766]" />
          {markupTools.map(([label, icon]) => (
            <button key={label} aria-label={label} className="flex h-[17px] w-4 shrink-0 items-center justify-center">{icon}</button>
          ))}
        </nav>
      </div>

      <footer className="flex h-[17px] shrink-0 items-center border-b border-[#8a8f99] bg-[#282c36] pl-1">
        <label htmlFor="path-mode" className="w-[34px] whitespace-nowrap">Path Mode</label>
        <div className="relative">
          <select id="path-mode" className="block h-[13px] w-[41px] appearance-none border border-[#414857] bg-[#313744] pl-[3px] leading-[10px]">
            <option>Line</option>
            <option>Arc</option>
          </select>
          <span className="pointer-events-none absolute top-[5px] right-1 border-x-2 border-t-[3px] border-x-transparent border-t-[#a9aeb9]" />
        </div>
        <button aria-label="Previous" className="ml-[5px] flex h-[13px] w-[15px] items-center justify-center bg-[#444b5c]">
          <SkipBack className="size-1.5" fill="currentColor" />
        </button>
      </footer>
    </div>
  )
}

export default App
